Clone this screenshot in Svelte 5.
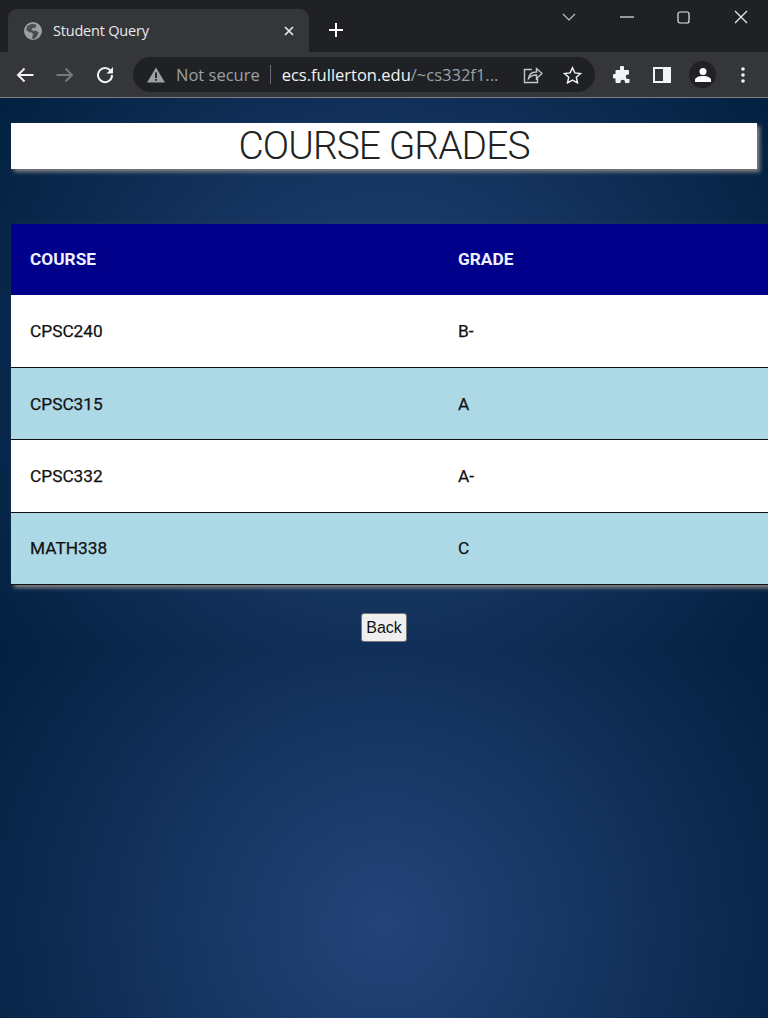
<script>
  const grades = [
    { course: 'CPSC240', grade: 'B-' },
    { course: 'CPSC315', grade: 'A' },
    { course: 'CPSC332', grade: 'A-' },
    { course: 'MATH338', grade: 'C' }
  ]
</script>

<div class="window">
  <header class="chrome">
    <div class="tabstrip">
      <div class="tab">
        <svg class="globe" viewBox="0 0 16 16" width="18" height="18">
          <circle cx="8" cy="8" r="8" fill="#9aa0a6" />
          <path d="M7 1.500 3 3.500 2 7l3.500 2.500L7 9l1 2-1 3.500 2 .8L12 12l1-3-3-1.500L8 8 6.500 6.500 8 5l2 .5 1-3z" fill="#4a4c50" />
        </svg>
        <span class="tab-title">Student Query</span>
        <svg class="tab-close" viewBox="0 0 10 10" width="10" height="10">
          <path d="M1 1l8 8M9 1l-8 8" stroke="#e8eaed" stroke-width="1.700" fill="none" />
        </svg>
      </div>
      <svg class="new-tab" viewBox="0 0 14 14" width="14" height="14">
        <path d="M7 0v14M0 7h14" stroke="#fff" stroke-width="2" fill="none" />
      </svg>
      <div class="win-controls">
        <svg viewBox="0 0 14 8" width="14" height="8"><path d="M1 1l6 6 6-6" stroke="#c4c7c9" stroke-width="1.100" fill="none" /></svg>
        <svg viewBox="0 0 14 2" width="14" height="2"><path d="M0 1h14" stroke="#e8eaed" stroke-width="1.200" /></svg>
        <svg viewBox="0 0 13 13" width="13" height="13"><rect x="1" y="1" width="11" height="11" rx="2" stroke="#e8eaed" stroke-width="1.200" fill="none" /></svg>
        <svg viewBox="0 0 14 14" width="14" height="14"><path d="M1 1l12 12M13 1L1 13" stroke="#e8eaed" stroke-width="1.300" fill="none" /></svg>
      </div>
    </div>
    <div class="toolbar">
      <svg class="nav" viewBox="0 0 18 16" width="18" height="16"><path d="M17.500 8H2M8.500 1.500 2 8l6.500 6.500" stroke="#f1f3f4" stroke-width="2" fill="none" /></svg>
      <svg class="nav" viewBox="0 0 18 16" width="18" height="16"><path d="M.5 8H16M9.500 1.500 16 8l-6.500 6.500" stroke="#75787c" stroke-width="2" fill="none" /></svg>
      <svg class="nav" viewBox="0 0 18 18" width="18" height="18">
        <path d="M15 5.500A7 7 0 1 0 16 9" stroke="#f1f3f4" stroke-width="2" fill="none" />
        <path d="M17 1v6.500h-6.500z" fill="#f1f3f4" />
      </svg>
      <div class="omnibox">
        <svg class="warn" viewBox="0 0 18 16" width="18" height="16">
          <path d="M9 0.500 18 15.500H0z" fill="#9aa0a6" />
          <path d="M8.100 5.500h1.800v5.500H8.100zM8.100 12h1.800v1.800H8.100z" fill="#202124" />
        </svg>
        <span class="not-secure">Not secure</span>
        <span class="sep"></span>
        <span class="url">ecs.fullerton.edu<span class="url-path">/~cs332f1...</span></span>
        <svg class="share" viewBox="0 0 20 18" width="20" height="18">
          <path d="M9 3.500H1.500v13h13V12M5.500 12.500c.5-4 3.500-6.500 8-6.500V2.500l5.500 5-5.500 5V9c-3 0-6 1-8 3.500z" stroke="#c4c7c9" stroke-width="1.400" fill="none" />
        </svg>
        <svg class="star" viewBox="0 0 20 19" width="19" height="18">
          <path d="M10 1.800l2.500 5.500 6 .6-4.500 4 1.300 5.900L10 14.800l-5.300 3 1.300-5.900-4.500-4 6-.6z" stroke="#f1f3f4" stroke-width="1.500" fill="none" />
        </svg>
      </div>
      <svg class="ext" viewBox="0 0 18 18" width="18" height="18">
        <path d="M7 1.500a2 2 0 0 1 4 0V4h4a1 1 0 0 1 1 1v3.500h-1a2.200 2.200 0 0 0 0 4.500h1.500V16a1 1 0 0 1-1 1h-3.500v-1a2.200 2.200 0 0 0-4.500 0v1H3.500a1 1 0 0 1-1-1v-3.500h-1a2.200 2.200 0 0 1 0-4.500h1V5a1 1 0 0 1 1-1H7z" fill="#f1f3f4" />
      </svg>
      <svg class="panel" viewBox="0 0 18 16" width="18" height="16">
        <rect x="1" y="1" width="16" height="14" stroke="#f1f3f4" stroke-width="2" fill="none" />
        <rect x="10" y="1" width="7" height="14" fill="#f1f3f4" />
      </svg>
      <div class="avatar">
        <svg viewBox="0 0 16 16" width="16" height="16">
          <circle cx="8" cy="4.500" r="3.500" fill="#fff" />
          <path d="M0 15v-2c0-2.500 4-4 8-4s8 1.500 8 4v2z" fill="#fff" />
        </svg>
      </div>
      <svg class="menu" viewBox="0 0 4 16" width="4" height="16">
        <circle cx="2" cy="2" r="1.800" fill="#f1f3f4" />
        <circle cx="2" cy="8" r="1.800" fill="#f1f3f4" />
        <circle cx="2" cy="14" r="1.800" fill="#f1f3f4" />
      </svg>
    </div>
  </header>

  <main class="page">
    <h1>COURSE GRADES</h1>
    <table>
      <thead>
        <tr>
          <th>COURSE</th>
          <th>GRADE</th>
        </tr>
      </thead>
      <tbody>
        {#each grades as row}
          <tr>
            <td>{row.course}</td>
            <td>{row.grade}</td>
          </tr>
        {/each}
      </tbody>
    </table>
    <div class="actions">
      <button type="button">Back</button>
    </div>
  </main>
</div>

<style>
  :global(body) {
    margin: 0;
    overflow: hidden;
  }

  .window {
    width: 768px;
    height: 1018px;
    display: flex;
    flex-direction: column;
    overflow: hidden;
    font-family: Roboto, "Liberation Sans", sans-serif;
  }

  .chrome {
    flex: none;
    height: 98px;
    box-sizing: border-box;
    background: #202124;
    border-bottom: 1px solid #7d7f82;
  }

  .tabstrip {
    height: 52px;
    display: flex;
    align-items: flex-end;
    padding-left: 8px;
  }

  .tab {
    width: 301px;
    height: 43px;
    box-sizing: border-box;
    display: flex;
    align-items: center;
    padding: 0 15px 0 16px;
    background: #35363a;
    border-radius: 9px 9px 0 0;
  }

  .globe {
    flex: none;
  }

  .tab-title {
    flex: 1;
    margin-left: 11px;
    font-family: "Open Sans", sans-serif;
    font-size: 14.500px;
    letter-spacing: -0.2px;
    color: #e8eaed;
  }

  .new-tab {
    align-self: center;
    margin: 8px 0 0 20px;
  }

  /* chevron, minimise, maximise, close: 57px apart from the right edge */
  .win-controls {
    margin-left: auto;
    align-self: flex-start;
    width: 206px;
    height: 34px;
    display: flex;
    align-items: center;
    justify-content: space-between;
    padding-right: 20px;
    box-sizing: border-box;
  }

  .toolbar {
    height: 45px;
    display: flex;
    align-items: center;
    background: #35363a;
    padding-left: 16px;
  }

  .nav {
    flex: none;
    margin-right: 22px;
  }

  .omnibox {
    flex: none;
    width: 462px;
    height: 35px;
    margin-left: -3px;
    box-sizing: border-box;
    display: flex;
    align-items: center;
    padding-left: 14px;
    background: #202124;
    border-radius: 18px;
    font-family: "Open Sans", sans-serif;
    font-size: 16.500px;
  }

  .warn {
    flex: none;
  }

  .not-secure {
    margin-left: 11px;
    color: #9aa0a6;
    white-space: nowrap;
  }

  .sep {
    flex: none;
    width: 1px;
    height: 19px;
    margin: 0 11px 0 10px;
    background: #6a6d71;
  }

  .url {
    color: #f1f3f4;
    white-space: nowrap;
  }

  .url-path {
    color: #9aa0a6;
  }

  .share {
    flex: none;
    margin-left: auto;
  }

  .star {
    flex: none;
    margin: 0 13px 0 20px;
  }

  .ext {
    flex: none;
    margin-left: 18px;
  }

  .panel {
    flex: none;
    margin-left: 22px;
  }

  .avatar {
    flex: none;
    width: 27px;
    height: 27px;
    margin-left: 18px;
    display: flex;
    align-items: center;
    justify-content: center;
    border-radius: 50%;
    background: #202124;
  }

  .menu {
    flex: none;
    margin-left: 25px;
  }

  /* the body gradient tiles: one 552px cell per content height */
  .page {
    flex: 1;
    box-sizing: border-box;
    padding: 25px 0 0 11px;
    background-image: radial-gradient(circle, #24447a, #02203f);
    background-size: 768px 552px;
  }

  h1 {
    width: 746px;
    height: 46px;
    margin: 0;
    background: #fff;
    box-shadow: 3px 3px 4px #808080;
    font-size: 38.900px;
    font-weight: 300;
    letter-spacing: -0.9px;
    line-height: 46px;
    text-align: center;
    color: #222;
  }

  table {
    width: 780px;
    margin-top: 55px;
    border-collapse: collapse;
    table-layout: fixed;
    box-shadow: 3px 3px 4px #808080;
    font-size: 17.280px;
  }

  th,
  td {
    padding: 0 19px 1px;
    text-align: left;
    font-weight: 400;
    box-sizing: border-box;
  }

  th:first-child,
  td:first-child {
    width: 428px;
  }

  th {
    height: 71px;
    background: #00008b;
    color: #eef0ff;
    font-weight: 700;
  }

  td {
    height: 72.400px;
    padding-bottom: 0;
    background: #fff;
    color: #111;
    border-bottom: 1px solid #111;
    -webkit-text-stroke: 0.25px #111;
  }

  tbody tr:nth-child(even) td {
    background: #add8e6;
  }

  .actions {
    display: flex;
    justify-content: center;
    margin: 28px 0 0 -11px;
  }

  button {
    width: 46px;
    height: 29px;
    padding: 0;
    border: 1px solid #767676;
    border-radius: 3px;
    background: #efefef;
    font-family: "Liberation Sans", Arial, sans-serif;
    font-size: 16px;
    color: #111;
  }
</style>
